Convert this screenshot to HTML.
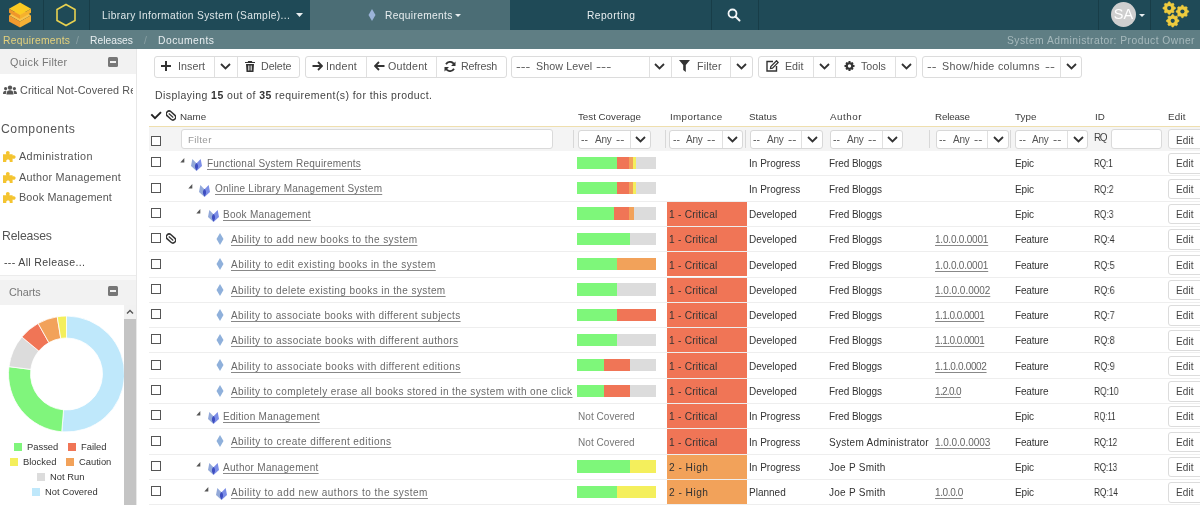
<!DOCTYPE html>
<html><head><meta charset="utf-8">
<style>
*{box-sizing:border-box;margin:0;padding:0}
html,body{width:1200px;height:505px;overflow:hidden;background:#fff;font-family:"Liberation Sans",sans-serif;color:#444}
.a{position:absolute;white-space:nowrap}
.ic{position:absolute}
.t{position:absolute;white-space:nowrap;font-size:11px;line-height:13px;will-change:transform}
.btn{position:absolute;border:1px solid #dcdcdc;border-radius:3px;background:#fff;height:22px}
.dv{position:absolute;top:0;bottom:0;width:1px;background:#e0e0e0}
.sel{position:absolute;border:1px solid #d8d8d8;border-radius:3px;background:#fff}
.lnk{text-decoration:underline;text-decoration-color:#888;text-underline-offset:1.5px}
</style></head><body>

<div class="a" style="left:0;top:0;width:1200px;height:30px;background:#1f4a57"></div>
<div class="a" style="left:43px;top:0;width:1px;height:30px;background:#183d48"></div>
<div class="a" style="left:89px;top:0;width:1px;height:30px;background:#183d48"></div>
<div class="a" style="left:711px;top:0;width:1px;height:30px;background:#183d48"></div>
<div class="a" style="left:758px;top:0;width:1px;height:30px;background:#183d48"></div>
<div class="a" style="left:1098px;top:0;width:1px;height:30px;background:#183d48"></div>
<div class="a" style="left:1150px;top:0;width:1px;height:30px;background:#183d48"></div>
<div class="a" style="left:310px;top:0;width:200px;height:30px;background:#4b6d75"></div>
<svg class="ic" style="left:8px;top:1px" width="24" height="28" viewBox="0 0 24 28">
<path d="M12 8 L23 14.2 L12 20.4 L1 14.2 Z" fill="#f9c44a"/>
<path d="M1 14.2 L12 20.4 L12 26.6 L1 20.4 Z" fill="#f29a2e"/>
<path d="M23 14.2 L12 20.4 L12 26.6 L23 20.4 Z" fill="#f6b236"/>
<path d="M0.6 11.6 L1.6 12.2 L1.6 13 L0.6 13.6 Z M23.4 11.6 L22.4 12.2 L22.4 13 L23.4 13.6 Z" fill="#1f4a57"/>
<path d="M12 1.5 L23 7.8 L12 14.1 L1 7.8 Z" fill="#fbcb22"/>
<path d="M1 7.8 L12 14.1 L12 18 L1 11.7 Z" fill="#f0972a"/>
<path d="M23 7.8 L12 14.1 L12 18 L23 11.7 Z" fill="#f5b12c"/>
</svg>
<svg class="ic" style="left:55px;top:3px" width="22" height="24" viewBox="0 0 22 24">
<path d="M11 1.5 L20 6.5 L20 17.5 L11 22.5 L2 17.5 L2 6.5 Z" fill="none" stroke="#e8d150" stroke-width="1.6"/></svg>
<div class="t" style="left:102px;top:5.50px;line-height:20px;font-size:10.2px;color:#dfe8ea;letter-spacing:0.362px;">Library Information System (Sample)...</div>
<svg class="ic" style="left:296px;top:13px" width="7" height="4" viewBox="0 0 7 4"><path d="M0 0 L7 0 L3.5 4 Z" fill="#e8eef0"/></svg>
<svg class="ic" style="left:368px;top:9px" width="8" height="12" viewBox="0 0 8 12"><path d="M4 0 L7.5 6 L4 12 L0.5 6 Z" fill="#9bb3d8"/></svg>
<div class="t" style="left:385px;top:5.50px;line-height:20px;font-size:10.2px;color:#e8eef0;letter-spacing:0.355px;">Requirements</div>
<svg class="ic" style="left:455px;top:14px" width="6" height="3" viewBox="0 0 6 3"><path d="M0 0 L6 0 L3 3 Z" fill="#e8eef0"/></svg>
<div class="t" style="left:587px;top:5.50px;line-height:20px;font-size:10.2px;color:#e8eef0;letter-spacing:0.472px;">Reporting</div>
<svg class="ic" style="left:727px;top:8px" width="14" height="14" viewBox="0 0 14 14"><circle cx="5.5" cy="5.5" r="4" fill="none" stroke="#f4f7f8" stroke-width="1.8"/><path d="M8.5 8.5 L12.5 12.5" stroke="#f4f7f8" stroke-width="2" stroke-linecap="round"/></svg>
<div class="a" style="left:1111px;top:2px;width:25px;height:25px;border-radius:50%;background:#cfcfcf"></div>
<div class="t" style="left:1110px;top:4px;width:27px;text-align:center;color:#fff;font-size:14.5px;line-height:20px">SA</div>
<svg class="ic" style="left:1139px;top:14px" width="6" height="3" viewBox="0 0 6 3"><path d="M0 0 L6 0 L3 3 Z" fill="#e8eef0"/></svg>
<svg class="ic" style="left:1160px;top:0px" width="40" height="30" viewBox="0 0 40 30"><polygon points="15.47,7.48 15.47,8.72 14.02,9.56 13.64,10.48 14.07,12.10 13.20,12.97 11.58,12.54 10.66,12.92 9.82,14.37 8.58,14.37 7.74,12.92 6.82,12.54 5.20,12.97 4.33,12.10 4.76,10.48 4.38,9.56 2.93,8.72 2.93,7.48 4.38,6.64 4.76,5.72 4.33,4.10 5.20,3.23 6.82,3.66 7.74,3.28 8.58,1.83 9.82,1.83 10.66,3.28 11.58,3.66 13.20,3.23 14.07,4.10 13.64,5.72 14.02,6.64" fill="#eecb3e" stroke="#eecb3e" stroke-width="0.6" stroke-linejoin="round"/><circle cx="9.2" cy="8.1" r="2.08" fill="#1f4a57"/><polygon points="28.67,10.88 28.67,12.12 27.22,12.96 26.84,13.88 27.27,15.50 26.40,16.37 24.78,15.94 23.86,16.32 23.02,17.77 21.78,17.77 20.94,16.32 20.02,15.94 18.40,16.37 17.53,15.50 17.96,13.88 17.58,12.96 16.13,12.12 16.13,10.88 17.58,10.04 17.96,9.12 17.53,7.50 18.40,6.63 20.02,7.06 20.94,6.68 21.78,5.23 23.02,5.23 23.86,6.68 24.78,7.06 26.40,6.63 27.27,7.50 26.84,9.12 27.22,10.04" fill="#eecb3e" stroke="#eecb3e" stroke-width="0.6" stroke-linejoin="round"/><circle cx="22.4" cy="11.5" r="2.08" fill="#1f4a57"/><polygon points="18.97,20.18 18.97,21.42 17.52,22.26 17.14,23.18 17.57,24.80 16.70,25.67 15.08,25.24 14.16,25.62 13.32,27.07 12.08,27.07 11.24,25.62 10.32,25.24 8.70,25.67 7.83,24.80 8.26,23.18 7.88,22.26 6.43,21.42 6.43,20.18 7.88,19.34 8.26,18.42 7.83,16.80 8.70,15.93 10.32,16.36 11.24,15.98 12.08,14.53 13.32,14.53 14.16,15.98 15.08,16.36 16.70,15.93 17.57,16.80 17.14,18.42 17.52,19.34" fill="#eecb3e" stroke="#eecb3e" stroke-width="0.6" stroke-linejoin="round"/><circle cx="12.7" cy="20.8" r="2.08" fill="#1f4a57"/></svg>
<div class="a" style="left:0;top:30px;width:1200px;height:19px;background:#5f7e84"></div>
<div class="t" style="left:3px;top:30.70px;line-height:20px;font-size:10.3px;color:#e6d27c;letter-spacing:0.262px;">Requirements</div>
<div class="t" style="left:76px;top:30.70px;line-height:20px;font-size:10.3px;color:#8aa0a4;">/</div>
<div class="t" style="left:90px;top:30.70px;line-height:20px;font-size:10.3px;color:#e8eef0;letter-spacing:0.009px;">Releases</div>
<div class="t" style="left:144px;top:30.70px;line-height:20px;font-size:10.3px;color:#8aa0a4;">/</div>
<div class="t" style="left:158px;top:30.70px;line-height:20px;font-size:10.3px;color:#e8eef0;letter-spacing:0.488px;">Documents</div>
<div class="t" style="left:1007px;top:30.70px;line-height:20px;font-size:10.3px;color:#a6b9bc;letter-spacing:0.467px;">System Administrator: Product Owner</div>
<div class="a" style="left:136px;top:49px;width:1px;height:456px;background:#e8e8e8"></div>
<div class="a" style="left:0;top:49px;width:136px;height:25px;background:#f2f2f2"></div>
<div class="t" style="left:9.5px;top:51.80px;line-height:20px;font-size:10.8px;color:#777;letter-spacing:0.236px;">Quick Filter</div>
<div class="a" style="left:108px;top:57px;width:10px;height:10px;background:#777;border-radius:1.5px"><div class="a" style="left:2px;top:4px;width:6px;height:2px;background:#f0f0f0"></div></div>
<svg class="ic" style="left:3px;top:85px" width="14" height="10" viewBox="0 0 14 10">
<circle cx="7" cy="2.6" r="2.2" fill="#555"/><path d="M3.5 9.5 C3.5 6 5 5.2 7 5.2 C9 5.2 10.5 6 10.5 9.5 Z" fill="#555"/>
<circle cx="2.6" cy="3.6" r="1.6" fill="#555"/><path d="M0 9 C0 6.5 1 5.8 2.6 5.8 C3.2 5.8 3.4 6 3.4 6 C3 7 2.9 8 2.9 9 Z" fill="#555"/>
<circle cx="11.4" cy="3.6" r="1.6" fill="#555"/><path d="M14 9 C14 6.5 13 5.8 11.4 5.8 C10.8 5.8 10.6 6 10.6 6 C11 7 11.1 8 11.1 9 Z" fill="#555"/>
</svg>
<div class="a" style="left:18px;top:80px;width:115px;height:20px;overflow:hidden"><div class="t" style="left:1.5px;top:0.00px;line-height:20px;font-size:10.8px;color:#555;letter-spacing:0.097px;">Critical Not-Covered Requirements</div></div>
<div class="t" style="left:1.4px;top:119.20px;line-height:20px;font-size:12.2px;color:#555;letter-spacing:0.536px;">Components</div>
<svg class="ic" style="left:2.6px;top:150.9px" width="13" height="11" viewBox="0 0 13 11"><path d="M0 3.2 H3.4 C3 2.6 2.9 2.2 2.9 1.8 C2.9 0.8 3.8 0 4.8 0 C5.8 0 6.7 0.8 6.7 1.8 C6.7 2.2 6.6 2.6 6.2 3.2 H9.6 V4.6 C10 4.3 10.4 4.2 10.8 4.2 C11.8 4.2 12.6 5 12.6 6 C12.6 7 11.8 7.8 10.8 7.8 C10.4 7.8 10 7.7 9.6 7.4 V11 H6.6 C6.7 10.7 6.8 10.4 6.8 10.1 C6.8 9.1 6 8.4 5 8.4 C4 8.4 3.2 9.1 3.2 10.1 C3.2 10.4 3.3 10.7 3.4 11 H0 Z" fill="#f4c430"/></svg>
<div class="t" style="left:19.4px;top:146.10px;line-height:20px;font-size:10.8px;color:#555;letter-spacing:0.390px;">Administration</div>
<svg class="ic" style="left:2.6px;top:172.0px" width="13" height="11" viewBox="0 0 13 11"><path d="M0 3.2 H3.4 C3 2.6 2.9 2.2 2.9 1.8 C2.9 0.8 3.8 0 4.8 0 C5.8 0 6.7 0.8 6.7 1.8 C6.7 2.2 6.6 2.6 6.2 3.2 H9.6 V4.6 C10 4.3 10.4 4.2 10.8 4.2 C11.8 4.2 12.6 5 12.6 6 C12.6 7 11.8 7.8 10.8 7.8 C10.4 7.8 10 7.7 9.6 7.4 V11 H6.6 C6.7 10.7 6.8 10.4 6.8 10.1 C6.8 9.1 6 8.4 5 8.4 C4 8.4 3.2 9.1 3.2 10.1 C3.2 10.4 3.3 10.7 3.4 11 H0 Z" fill="#f4c430"/></svg>
<div class="t" style="left:19.4px;top:167.20px;line-height:20px;font-size:10.8px;color:#555;letter-spacing:0.246px;">Author Management</div>
<svg class="ic" style="left:2.6px;top:192.20000000000002px" width="13" height="11" viewBox="0 0 13 11"><path d="M0 3.2 H3.4 C3 2.6 2.9 2.2 2.9 1.8 C2.9 0.8 3.8 0 4.8 0 C5.8 0 6.7 0.8 6.7 1.8 C6.7 2.2 6.6 2.6 6.2 3.2 H9.6 V4.6 C10 4.3 10.4 4.2 10.8 4.2 C11.8 4.2 12.6 5 12.6 6 C12.6 7 11.8 7.8 10.8 7.8 C10.4 7.8 10 7.7 9.6 7.4 V11 H6.6 C6.7 10.7 6.8 10.4 6.8 10.1 C6.8 9.1 6 8.4 5 8.4 C4 8.4 3.2 9.1 3.2 10.1 C3.2 10.4 3.3 10.7 3.4 11 H0 Z" fill="#f4c430"/></svg>
<div class="t" style="left:19.4px;top:187.40px;line-height:20px;font-size:10.8px;color:#555;letter-spacing:0.160px;">Book Management</div>
<div class="t" style="left:1.7px;top:226.40px;line-height:20px;font-size:12.2px;color:#555;letter-spacing:-0.123px;">Releases</div>
<div class="t" style="left:4.2px;top:251.50px;line-height:20px;font-size:10.6px;color:#444;letter-spacing:0.329px;">--- All Release...</div>
<div class="a" style="left:0;top:275px;width:136px;height:5px;background:#f8f8f8;border-top:1px solid #ececec"></div>
<div class="a" style="left:0;top:280px;width:136px;height:25px;background:#f2f2f2"></div>
<div class="t" style="left:9.4px;top:282.10px;line-height:20px;font-size:10.8px;color:#777;letter-spacing:-0.042px;">Charts</div>
<div class="a" style="left:108px;top:286px;width:10px;height:10px;background:#777;border-radius:1.5px"><div class="a" style="left:2px;top:4px;width:6px;height:2px;background:#f0f0f0"></div></div>
<div class="a" style="left:124px;top:305px;width:12px;height:200px;background:#f1f1f1"></div>
<div class="a" style="left:124px;top:319px;width:12px;height:186px;background:#c4c4c4"></div>
<svg class="ic" style="left:126px;top:309px" width="8" height="5" viewBox="0 0 8 5"><path d="M1 4.5 L4 1.5 L7 4.5" fill="none" stroke="#555" stroke-width="1.4"/></svg>
<svg class="ic" style="left:0;top:305px" width="124" height="200" viewBox="0 305 124 200"><path d="M66.50 316.00 A58 58 0 1 1 61.75 431.80 L63.55 409.88 A36 36 0 1 0 66.50 338.00 Z" fill="#bfe8fb" stroke="#fff" stroke-width="0.8"/><path d="M61.75 431.80 A58 58 0 0 1 8.97 366.63 L30.79 369.43 A36 36 0 0 0 63.55 409.88 Z" fill="#80f57c" stroke="#fff" stroke-width="0.8"/><path d="M8.97 366.63 A58 58 0 0 1 21.87 336.95 L38.80 351.00 A36 36 0 0 0 30.79 369.43 Z" fill="#dcdcdc" stroke="#fff" stroke-width="0.8"/><path d="M21.87 336.95 A58 58 0 0 1 38.12 323.42 L48.88 342.61 A36 36 0 0 0 38.80 351.00 Z" fill="#f07556" stroke="#fff" stroke-width="0.8"/><path d="M38.12 323.42 A58 58 0 0 1 57.23 316.75 L60.74 338.46 A36 36 0 0 0 48.88 342.61 Z" fill="#f2a25a" stroke="#fff" stroke-width="0.8"/><path d="M57.23 316.75 A58 58 0 0 1 66.50 316.00 L66.50 338.00 A36 36 0 0 0 60.74 338.46 Z" fill="#f4ef5c" stroke="#fff" stroke-width="0.8"/></svg>
<div class="a" style="left:14px;top:442.5px;width:8px;height:8px;background:#80f57c"></div><div class="t" style="left:26.5px;top:440.8px;color:#333;font-size:9.4px;line-height:12px">Passed</div>
<div class="a" style="left:68px;top:442.5px;width:8px;height:8px;background:#f07556"></div><div class="t" style="left:81px;top:440.8px;color:#333;font-size:9.4px;line-height:12px">Failed</div>
<div class="a" style="left:10px;top:457.5px;width:8px;height:8px;background:#f4ef5c"></div><div class="t" style="left:22.5px;top:455.8px;color:#333;font-size:9.4px;line-height:12px">Blocked</div>
<div class="a" style="left:66px;top:457.5px;width:8px;height:8px;background:#f2a25a"></div><div class="t" style="left:79px;top:455.8px;color:#333;font-size:9.4px;line-height:12px">Caution</div>
<div class="a" style="left:37px;top:472.5px;width:8px;height:8px;background:#dcdcdc"></div><div class="t" style="left:49.5px;top:470.8px;color:#333;font-size:9.4px;line-height:12px">Not Run</div>
<div class="a" style="left:32px;top:487.5px;width:8px;height:8px;background:#bfe8fb"></div><div class="t" style="left:45px;top:485.8px;color:#333;font-size:9.4px;line-height:12px">Not Covered</div>
<div class="btn" style="left:153.5px;top:55.5px;width:146.5px"><div class="dv" style="left:59.0px"></div><div class="dv" style="left:82.0px"></div></div>
<svg class="ic" style="left:161px;top:61px" width="10" height="10" viewBox="0 0 10 10"><path d="M5 0 V10 M0 5 H10" stroke="#333" stroke-width="2"/></svg>
<div class="t" style="left:177.5px;top:56.30px;line-height:20px;font-size:10.7px;color:#555;letter-spacing:0.048px;">Insert</div>
<svg class="ic" style="left:219.5px;top:63px" width="11" height="7" viewBox="0 0 11 7"><path d="M1 1 L5.5 5.5 L10 1" fill="none" stroke="#333" stroke-width="1.8"/></svg>
<svg class="ic" style="left:244.5px;top:60.5px" width="10" height="11" viewBox="0 0 10 11"><path d="M0 1.5 H10 M3.5 1.5 V0.3 H6.5 V1.5" stroke="#333" stroke-width="1.2" fill="none"/><path d="M1 3 H9 L8.5 11 H1.5 Z" fill="#333"/><path d="M3.5 4.5 V9.5 M5 4.5 V9.5 M6.5 4.5 V9.5" stroke="#fff" stroke-width="0.7"/></svg>
<div class="t" style="left:260.5px;top:56.30px;line-height:20px;font-size:10.7px;color:#555;letter-spacing:-0.086px;">Delete</div>
<div class="btn" style="left:304.5px;top:55.5px;width:202.0px"><div class="dv" style="left:60.0px"></div><div class="dv" style="left:130.5px"></div></div>
<svg class="ic" style="left:312px;top:61px" width="11" height="10" viewBox="0 0 11 10"><path d="M0.5 5 H10 M6 1 L10 5 L6 9" fill="none" stroke="#333" stroke-width="1.8"/></svg>
<div class="t" style="left:326px;top:56.30px;line-height:20px;font-size:10.7px;color:#555;letter-spacing:0.210px;">Indent</div>
<svg class="ic" style="left:373.5px;top:61px" width="11" height="10" viewBox="0 0 11 10"><path d="M10.5 5 H1 M5 1 L1 5 L5 9" fill="none" stroke="#333" stroke-width="1.8"/></svg>
<div class="t" style="left:387.6px;top:56.30px;line-height:20px;font-size:10.7px;color:#555;letter-spacing:0.205px;">Outdent</div>
<svg class="ic" style="left:444px;top:60.5px" width="12" height="11" viewBox="0 0 12 11"><path d="M10.2 4 A4.5 4.5 0 0 0 2 3.2 M1.8 7 A4.5 4.5 0 0 0 10 7.8" fill="none" stroke="#333" stroke-width="1.8"/><path d="M11.5 0.5 V5 H7 Z M0.5 10.5 V6 H5 Z" fill="#333"/></svg>
<div class="t" style="left:461.3px;top:56.30px;line-height:20px;font-size:10.7px;color:#555;letter-spacing:-0.194px;">Refresh</div>
<div class="btn" style="left:510.5px;top:55.5px;width:242.5px"><div class="dv" style="left:137.5px"></div><div class="dv" style="left:159.5px"></div><div class="dv" style="left:218.0px"></div></div>
<div class="t" style="left:516px;top:56.30px;line-height:20px;font-size:10.7px;color:#555;transform:scaleX(1.338);transform-origin:0 0;">---</div>
<div class="t" style="left:535.8px;top:56.30px;line-height:20px;font-size:10.7px;color:#555;letter-spacing:0.098px;">Show Level</div>
<div class="t" style="left:596.4px;top:56.30px;line-height:20px;font-size:10.7px;color:#555;transform:scaleX(1.431);transform-origin:0 0;">---</div>
<svg class="ic" style="left:654px;top:63px" width="11" height="7" viewBox="0 0 11 7"><path d="M1 1 L5.5 5.5 L10 1" fill="none" stroke="#333" stroke-width="1.8"/></svg>
<svg class="ic" style="left:679px;top:60px" width="11" height="12" viewBox="0 0 11 12"><path d="M0 0 H11 L6.8 5 V12 L4.2 10 V5 Z" fill="#333"/></svg>
<div class="t" style="left:696.5px;top:56.30px;line-height:20px;font-size:10.7px;color:#555;letter-spacing:0.145px;">Filter</div>
<svg class="ic" style="left:736px;top:63px" width="11" height="7" viewBox="0 0 11 7"><path d="M1 1 L5.5 5.5 L10 1" fill="none" stroke="#333" stroke-width="1.8"/></svg>
<div class="btn" style="left:757.5px;top:55.5px;width:159.5px"><div class="dv" style="left:54.0px"></div><div class="dv" style="left:76.0px"></div><div class="dv" style="left:136.0px"></div></div>
<svg class="ic" style="left:765.5px;top:60px" width="13" height="12" viewBox="0 0 13 12"><path d="M7 1.5 H1 V11 H10.5 V6" fill="none" stroke="#333" stroke-width="1.4"/><path d="M10.5 0.8 L12.2 2.5 L6.5 8.2 L4.5 8.5 L4.8 6.5 Z" fill="none" stroke="#333" stroke-width="1.3"/></svg>
<div class="t" style="left:784.6px;top:56.30px;line-height:20px;font-size:10.7px;color:#555;letter-spacing:-0.013px;">Edit</div>
<svg class="ic" style="left:818.5px;top:63px" width="11" height="7" viewBox="0 0 11 7"><path d="M1 1 L5.5 5.5 L10 1" fill="none" stroke="#333" stroke-width="1.8"/></svg>
<svg class="ic" style="left:843.5px;top:60.5px" width="11" height="11" viewBox="0 0 11 11"><path d="M4.6 0 H6.4 L6.8 1.7 L8.3 1 L9.5 2.2 L8.8 3.7 L10.5 4.1 V5.9 L8.8 6.3 L9.5 7.8 L8.3 9 L6.8 8.3 L6.4 10 H4.6 L4.2 8.3 L2.7 9 L1.5 7.8 L2.2 6.3 L0.5 5.9 V4.1 L2.2 3.7 L1.5 2.2 L2.7 1 L4.2 1.7 Z" fill="#333"/><circle cx="5.5" cy="5" r="1.7" fill="#fff"/></svg>
<div class="t" style="left:861px;top:56.30px;line-height:20px;font-size:10.7px;color:#555;letter-spacing:0.005px;">Tools</div>
<svg class="ic" style="left:900.5px;top:63px" width="11" height="7" viewBox="0 0 11 7"><path d="M1 1 L5.5 5.5 L10 1" fill="none" stroke="#333" stroke-width="1.8"/></svg>
<div class="btn" style="left:922px;top:55.5px;width:160px"><div class="dv" style="left:137px"></div></div>
<div class="t" style="left:927px;top:56.30px;line-height:20px;font-size:10.7px;color:#555;transform:scaleX(1.333);transform-origin:0 0;">--</div>
<div class="t" style="left:942px;top:56.30px;line-height:20px;font-size:10.7px;color:#555;letter-spacing:0.301px;">Show/hide columns</div>
<div class="t" style="left:1044.7px;top:56.30px;line-height:20px;font-size:10.7px;color:#555;transform:scaleX(1.389);transform-origin:0 0;">--</div>
<svg class="ic" style="left:1066px;top:63px" width="11" height="7" viewBox="0 0 11 7"><path d="M1 1 L5.5 5.5 L10 1" fill="none" stroke="#333" stroke-width="1.8"/></svg>
<div class="t" style="left:155.4px;top:85.20px;line-height:20px;font-size:10.5px;color:#444;letter-spacing:0.431px;">Displaying <b style="color:#333">15</b> out of <b style="color:#333">35</b> requirement(s) for this product.</div>
<svg class="ic" style="left:150px;top:110px" width="12" height="11" viewBox="0 0 12 11"><path d="M1.3 4.3 L5 8.2 L11 2.2" fill="none" stroke="#222" stroke-width="1.9"/></svg>
<svg class="ic" style="left:165.5px;top:110px" width="10" height="11" viewBox="0 0 10 11"><g transform="rotate(-48 5 5.5)"><rect x="2.2" y="0.2" width="5.6" height="10.6" rx="2.8" fill="none" stroke="#333" stroke-width="1.5"/><path d="M5 2.5 V8.5" stroke="#333" stroke-width="1.1"/></g></svg>
<div class="t" style="left:180px;top:107.00px;line-height:20px;font-size:9.8px;color:#3c3c3c;letter-spacing:0.019px;">Name</div>
<div class="t" style="left:578.2px;top:107.00px;line-height:20px;font-size:9.8px;color:#3c3c3c;letter-spacing:-0.024px;">Test Coverage</div>
<div class="t" style="left:669.5px;top:107.00px;line-height:20px;font-size:9.8px;color:#3c3c3c;letter-spacing:0.364px;">Importance</div>
<div class="t" style="left:749.3px;top:107.00px;line-height:20px;font-size:9.8px;color:#3c3c3c;letter-spacing:0.023px;">Status</div>
<div class="t" style="left:829.6px;top:107.00px;line-height:20px;font-size:9.8px;color:#3c3c3c;letter-spacing:0.545px;">Author</div>
<div class="t" style="left:934.6px;top:107.00px;line-height:20px;font-size:9.8px;color:#3c3c3c;letter-spacing:-0.159px;">Release</div>
<div class="t" style="left:1015px;top:107.00px;line-height:20px;font-size:9.8px;color:#3c3c3c;letter-spacing:0.051px;">Type</div>
<div class="t" style="left:1094.7px;top:107.00px;line-height:20px;font-size:9.8px;color:#3c3c3c;">ID</div>
<div class="t" style="left:1167.9px;top:107.00px;line-height:20px;font-size:9.8px;color:#3c3c3c;letter-spacing:0.238px;">Edit</div>
<div class="a" style="left:149px;top:126px;width:1051px;height:1px;background:#efdfae"></div>
<div class="a" style="left:149px;top:127px;width:1051px;height:23.5px;background:#f4f4f4"></div>
<div class="a" style="left:151px;top:135.5px;width:10px;height:10px;border:1px solid #555;background:#fff"></div>
<div class="a" style="left:180.5px;top:128.5px;width:372px;height:20px;border:1px solid #dadada;border-radius:3px;background:#fff"></div>
<div class="t" style="left:188.3px;top:129.50px;line-height:20px;font-size:9.8px;color:#999;letter-spacing:0.325px;">Filter</div>
<div class="a" style="left:572.5px;top:130px;width:1px;height:18px;background:#d8d8d8"></div>
<div class="a" style="left:664.5px;top:130px;width:1px;height:18px;background:#d8d8d8"></div>
<div class="a" style="left:745px;top:130px;width:1px;height:18px;background:#d8d8d8"></div>
<div class="a" style="left:929px;top:130px;width:1px;height:18px;background:#d8d8d8"></div>
<div class="a" style="left:1010px;top:130px;width:1px;height:18px;background:#d8d8d8"></div>
<div class="sel" style="left:577.5px;top:129.5px;width:73.5px;height:19px"><div class="dv" style="left:51.0px;background:#e0e0e0"></div></div>
<div class="t" style="left:581.3px;top:130.00px;line-height:20px;font-size:10px;color:#555;transform:scaleX(1.036);transform-origin:0 0;">--</div>
<div class="t" style="left:594.5px;top:130.00px;line-height:20px;font-size:10px;color:#555;letter-spacing:-0.216px;">Any</div>
<div class="t" style="left:615.5px;top:130.00px;line-height:20px;font-size:10px;color:#555;transform:scaleX(1.246);transform-origin:0 0;">--</div>
<svg class="ic" style="left:635.0px;top:136px" width="11" height="7" viewBox="0 0 11 7"><path d="M1 1 L5.5 5.5 L10 1" fill="none" stroke="#333" stroke-width="1.8"/></svg>
<div class="sel" style="left:669px;top:129.5px;width:74px;height:19px"><div class="dv" style="left:51.5px;background:#e0e0e0"></div></div>
<div class="t" style="left:672.8px;top:130.00px;line-height:20px;font-size:10px;color:#555;transform:scaleX(1.036);transform-origin:0 0;">--</div>
<div class="t" style="left:686px;top:130.00px;line-height:20px;font-size:10px;color:#555;letter-spacing:-0.216px;">Any</div>
<div class="t" style="left:707px;top:130.00px;line-height:20px;font-size:10px;color:#555;transform:scaleX(1.246);transform-origin:0 0;">--</div>
<svg class="ic" style="left:727.0px;top:136px" width="11" height="7" viewBox="0 0 11 7"><path d="M1 1 L5.5 5.5 L10 1" fill="none" stroke="#333" stroke-width="1.8"/></svg>
<div class="sel" style="left:749.5px;top:129.5px;width:73.5px;height:19px"><div class="dv" style="left:50.5px;background:#e0e0e0"></div></div>
<div class="t" style="left:753.3px;top:130.00px;line-height:20px;font-size:10px;color:#555;transform:scaleX(1.036);transform-origin:0 0;">--</div>
<div class="t" style="left:766.5px;top:130.00px;line-height:20px;font-size:10px;color:#555;letter-spacing:-0.216px;">Any</div>
<div class="t" style="left:787.5px;top:130.00px;line-height:20px;font-size:10px;color:#555;transform:scaleX(1.246);transform-origin:0 0;">--</div>
<svg class="ic" style="left:806.5px;top:136px" width="11" height="7" viewBox="0 0 11 7"><path d="M1 1 L5.5 5.5 L10 1" fill="none" stroke="#333" stroke-width="1.8"/></svg>
<div class="sel" style="left:829.5px;top:129.5px;width:73.5px;height:19px"><div class="dv" style="left:51.0px;background:#e0e0e0"></div></div>
<div class="t" style="left:833.3px;top:130.00px;line-height:20px;font-size:10px;color:#555;transform:scaleX(1.036);transform-origin:0 0;">--</div>
<div class="t" style="left:846.5px;top:130.00px;line-height:20px;font-size:10px;color:#555;letter-spacing:-0.216px;">Any</div>
<div class="t" style="left:867.5px;top:130.00px;line-height:20px;font-size:10px;color:#555;transform:scaleX(1.246);transform-origin:0 0;">--</div>
<svg class="ic" style="left:887.0px;top:136px" width="11" height="7" viewBox="0 0 11 7"><path d="M1 1 L5.5 5.5 L10 1" fill="none" stroke="#333" stroke-width="1.8"/></svg>
<div class="sel" style="left:935.5px;top:129.5px;width:73.5px;height:19px"><div class="dv" style="left:50.5px;background:#e0e0e0"></div></div>
<div class="t" style="left:939.3px;top:130.00px;line-height:20px;font-size:10px;color:#555;transform:scaleX(1.036);transform-origin:0 0;">--</div>
<div class="t" style="left:952.5px;top:130.00px;line-height:20px;font-size:10px;color:#555;letter-spacing:-0.216px;">Any</div>
<div class="t" style="left:973.5px;top:130.00px;line-height:20px;font-size:10px;color:#555;transform:scaleX(1.246);transform-origin:0 0;">--</div>
<svg class="ic" style="left:992.5px;top:136px" width="11" height="7" viewBox="0 0 11 7"><path d="M1 1 L5.5 5.5 L10 1" fill="none" stroke="#333" stroke-width="1.8"/></svg>
<div class="sel" style="left:1015px;top:129.5px;width:73px;height:19px"><div class="dv" style="left:51px;background:#e0e0e0"></div></div>
<div class="t" style="left:1018.8px;top:130.00px;line-height:20px;font-size:10px;color:#555;transform:scaleX(1.036);transform-origin:0 0;">--</div>
<div class="t" style="left:1032px;top:130.00px;line-height:20px;font-size:10px;color:#555;letter-spacing:-0.216px;">Any</div>
<div class="t" style="left:1053px;top:130.00px;line-height:20px;font-size:10px;color:#555;transform:scaleX(1.246);transform-origin:0 0;">--</div>
<svg class="ic" style="left:1072.5px;top:136px" width="11" height="7" viewBox="0 0 11 7"><path d="M1 1 L5.5 5.5 L10 1" fill="none" stroke="#333" stroke-width="1.8"/></svg>
<div class="t" style="left:1094px;top:127.60px;line-height:20px;font-size:10px;color:#444;letter-spacing:-1.500px;">RQ</div>
<div class="a" style="left:1111px;top:128.5px;width:51px;height:20px;border:1px solid #dadada;border-radius:3px;background:#fff"></div>
<div class="btn" style="left:1167.5px;top:129px;width:40px;height:20px"></div>
<div class="t" style="left:1176px;top:130.50px;line-height:20px;font-size:10px;color:#444;letter-spacing:0.089px;">Edit</div>
<div class="a" style="left:149px;top:175.30px;width:1051px;height:1px;background:#eeeeee"></div>
<div class="a" style="left:151px;top:157.30px;width:10px;height:10px;border:1px solid #555;background:#fff"></div>
<svg class="ic" style="left:180.0px;top:158.20000000000002px" width="5" height="5" viewBox="0 0 5 5"><path d="M4.3 0 L4.3 4.6 L0.3 4.6 Z" fill="#555"/></svg>
<svg class="ic" style="left:191.3px;top:159.20000000000002px" width="11" height="12" viewBox="0 0 11 12"><path d="M1.3 0 L5.5 4.2 L5.5 12 L0 6.9 Z" fill="#93a9d9"/><path d="M9.7 0 L5.5 4.2 L5.5 12 L11 6.9 Z" fill="#7b8de6"/><path d="M5.5 4 C7.1 5.2 7.3 7.3 6.9 8.7 L5.5 11.8 L4.1 8.7 C3.7 7.3 3.9 5.2 5.5 4 Z" fill="#3d4dc0"/></svg>
<div class="t lnk" style="left:206.5px;top:154.10px;line-height:20px;font-size:10px;color:#6a6a6a;letter-spacing:0.225px;">Functional System Requirements</div>
<div class="a" style="left:577px;top:156.80px;width:40.00px;height:12.3px;background:#7ef77a"></div>
<div class="a" style="left:617px;top:156.80px;width:12.40px;height:12.3px;background:#f07556"></div>
<div class="a" style="left:629.4px;top:156.80px;width:3.30px;height:12.3px;background:#f2a25a"></div>
<div class="a" style="left:632.7px;top:156.80px;width:3.30px;height:12.3px;background:#f4ef5c"></div>
<div class="a" style="left:636px;top:156.80px;width:20.00px;height:12.3px;background:#dcdcdc"></div>
<div class="t" style="left:749.2px;top:154.30px;line-height:20px;font-size:10px;color:#333;letter-spacing:0.005px;">In Progress</div>
<div class="t" style="left:829.3px;top:154.30px;line-height:20px;font-size:10px;color:#333;letter-spacing:-0.092px;">Fred Bloggs</div>
<div class="t" style="left:1014.5px;top:154.30px;line-height:20px;font-size:10px;color:#333;letter-spacing:-0.151px;">Epic</div>
<div class="t" style="left:1094.4px;top:154.30px;line-height:20px;font-size:10.4px;color:#333;transform:scaleX(0.770);transform-origin:0 0;">RQ:1</div>
<div class="btn" style="left:1168px;top:153.30px;width:40px;height:20.5px"></div>
<div class="t" style="left:1176px;top:154.40px;line-height:20px;font-size:10px;color:#444;letter-spacing:0.089px;">Edit</div>
<div class="a" style="left:149px;top:200.60px;width:1051px;height:1px;background:#eeeeee"></div>
<div class="a" style="left:151px;top:182.60px;width:10px;height:10px;border:1px solid #555;background:#fff"></div>
<svg class="ic" style="left:188.1px;top:183.50000000000003px" width="5" height="5" viewBox="0 0 5 5"><path d="M4.3 0 L4.3 4.6 L0.3 4.6 Z" fill="#555"/></svg>
<svg class="ic" style="left:199.4px;top:184.50000000000003px" width="11" height="12" viewBox="0 0 11 12"><path d="M1.3 0 L5.5 4.2 L5.5 12 L0 6.9 Z" fill="#93a9d9"/><path d="M9.7 0 L5.5 4.2 L5.5 12 L11 6.9 Z" fill="#7b8de6"/><path d="M5.5 4 C7.1 5.2 7.3 7.3 6.9 8.7 L5.5 11.8 L4.1 8.7 C3.7 7.3 3.9 5.2 5.5 4 Z" fill="#3d4dc0"/></svg>
<div class="t lnk" style="left:214.6px;top:179.40px;line-height:20px;font-size:10px;color:#6a6a6a;letter-spacing:0.241px;">Online Library Management System</div>
<div class="a" style="left:577px;top:182.10px;width:40.00px;height:12.3px;background:#7ef77a"></div>
<div class="a" style="left:617px;top:182.10px;width:12.40px;height:12.3px;background:#f07556"></div>
<div class="a" style="left:629.4px;top:182.10px;width:3.30px;height:12.3px;background:#f2a25a"></div>
<div class="a" style="left:632.7px;top:182.10px;width:3.30px;height:12.3px;background:#f4ef5c"></div>
<div class="a" style="left:636px;top:182.10px;width:20.00px;height:12.3px;background:#dcdcdc"></div>
<div class="t" style="left:749.2px;top:179.60px;line-height:20px;font-size:10px;color:#333;letter-spacing:0.005px;">In Progress</div>
<div class="t" style="left:829.3px;top:179.60px;line-height:20px;font-size:10px;color:#333;letter-spacing:-0.092px;">Fred Bloggs</div>
<div class="t" style="left:1014.5px;top:179.60px;line-height:20px;font-size:10px;color:#333;letter-spacing:-0.151px;">Epic</div>
<div class="t" style="left:1094.4px;top:179.60px;line-height:20px;font-size:10.4px;color:#333;transform:scaleX(0.803);transform-origin:0 0;">RQ:2</div>
<div class="btn" style="left:1168px;top:178.60px;width:40px;height:20.5px"></div>
<div class="t" style="left:1176px;top:179.70px;line-height:20px;font-size:10px;color:#444;letter-spacing:0.089px;">Edit</div>
<div class="a" style="left:149px;top:225.90px;width:1051px;height:1px;background:#eeeeee"></div>
<div class="a" style="left:151px;top:207.90px;width:10px;height:10px;border:1px solid #555;background:#fff"></div>
<svg class="ic" style="left:196.2px;top:208.8px" width="5" height="5" viewBox="0 0 5 5"><path d="M4.3 0 L4.3 4.6 L0.3 4.6 Z" fill="#555"/></svg>
<svg class="ic" style="left:207.5px;top:209.8px" width="11" height="12" viewBox="0 0 11 12"><path d="M1.3 0 L5.5 4.2 L5.5 12 L0 6.9 Z" fill="#93a9d9"/><path d="M9.7 0 L5.5 4.2 L5.5 12 L11 6.9 Z" fill="#7b8de6"/><path d="M5.5 4 C7.1 5.2 7.3 7.3 6.9 8.7 L5.5 11.8 L4.1 8.7 C3.7 7.3 3.9 5.2 5.5 4 Z" fill="#3d4dc0"/></svg>
<div class="t lnk" style="left:222.7px;top:204.70px;line-height:20px;font-size:10px;color:#6a6a6a;letter-spacing:0.261px;">Book Management</div>
<div class="a" style="left:577px;top:207.40px;width:37.00px;height:12.3px;background:#7ef77a"></div>
<div class="a" style="left:614px;top:207.40px;width:15.00px;height:12.3px;background:#f07556"></div>
<div class="a" style="left:629px;top:207.40px;width:4.50px;height:12.3px;background:#f2a25a"></div>
<div class="a" style="left:633.5px;top:207.40px;width:22.50px;height:12.3px;background:#dcdcdc"></div>
<div class="a" style="left:667px;top:201.60px;width:80px;height:24.30px;background:#f07556"></div>
<div class="t" style="left:669px;top:204.90px;line-height:20px;font-size:10.2px;color:#333;letter-spacing:0.227px;">1 - Critical</div>
<div class="t" style="left:749.2px;top:204.90px;line-height:20px;font-size:10px;color:#333;letter-spacing:0.006px;">Developed</div>
<div class="t" style="left:829.3px;top:204.90px;line-height:20px;font-size:10px;color:#333;letter-spacing:-0.092px;">Fred Bloggs</div>
<div class="t" style="left:1014.5px;top:204.90px;line-height:20px;font-size:10px;color:#333;letter-spacing:-0.151px;">Epic</div>
<div class="t" style="left:1094.4px;top:204.90px;line-height:20px;font-size:10.4px;color:#333;transform:scaleX(0.803);transform-origin:0 0;">RQ:3</div>
<div class="btn" style="left:1168px;top:203.90px;width:40px;height:20.5px"></div>
<div class="t" style="left:1176px;top:205.00px;line-height:20px;font-size:10px;color:#444;letter-spacing:0.089px;">Edit</div>
<div class="a" style="left:149px;top:251.20px;width:1051px;height:1px;background:#eeeeee"></div>
<div class="a" style="left:151px;top:233.20px;width:10px;height:10px;border:1px solid #555;background:#fff"></div>
<svg class="ic" style="left:165.5px;top:233.20px" width="10" height="11" viewBox="0 0 10 11"><g transform="rotate(-48 5 5.5)"><rect x="2.2" y="0.2" width="5.6" height="10.6" rx="2.8" fill="none" stroke="#333" stroke-width="1.5"/><path d="M5 2.5 V8.5" stroke="#333" stroke-width="1.1"/></g></svg>
<svg class="ic" style="left:216.3px;top:232.9px" width="8" height="12" viewBox="0 0 8 12"><path d="M4 0 L7.5 6 L4 12 L0.5 6 Z" fill="#8fb0db"/></svg>
<div class="t lnk" style="left:230.8px;top:230.00px;line-height:20px;font-size:10px;color:#6a6a6a;letter-spacing:0.430px;">Ability to add new books to the system</div>
<div class="a" style="left:577px;top:232.70px;width:53.00px;height:12.3px;background:#7ef77a"></div>
<div class="a" style="left:630px;top:232.70px;width:26.00px;height:12.3px;background:#dcdcdc"></div>
<div class="a" style="left:667px;top:226.90px;width:80px;height:24.30px;background:#f07556"></div>
<div class="t" style="left:669px;top:230.20px;line-height:20px;font-size:10.2px;color:#333;letter-spacing:0.227px;">1 - Critical</div>
<div class="t" style="left:749.2px;top:230.20px;line-height:20px;font-size:10px;color:#333;letter-spacing:0.006px;">Developed</div>
<div class="t" style="left:829.3px;top:230.20px;line-height:20px;font-size:10px;color:#333;letter-spacing:-0.092px;">Fred Bloggs</div>
<div class="t lnk" style="left:934.7px;top:230.20px;line-height:20px;font-size:10px;color:#666;letter-spacing:-0.201px;">1.0.0.0.0001</div>
<div class="t" style="left:1014.5px;top:230.20px;line-height:20px;font-size:10px;color:#333;letter-spacing:-0.161px;">Feature</div>
<div class="t" style="left:1094.4px;top:230.20px;line-height:20px;font-size:10.4px;color:#333;transform:scaleX(0.849);transform-origin:0 0;">RQ:4</div>
<div class="btn" style="left:1168px;top:229.20px;width:40px;height:20.5px"></div>
<div class="t" style="left:1176px;top:230.30px;line-height:20px;font-size:10px;color:#444;letter-spacing:0.089px;">Edit</div>
<div class="a" style="left:149px;top:276.50px;width:1051px;height:1px;background:#eeeeee"></div>
<div class="a" style="left:151px;top:258.50px;width:10px;height:10px;border:1px solid #555;background:#fff"></div>
<svg class="ic" style="left:216.3px;top:258.2px" width="8" height="12" viewBox="0 0 8 12"><path d="M4 0 L7.5 6 L4 12 L0.5 6 Z" fill="#8fb0db"/></svg>
<div class="t lnk" style="left:230.8px;top:255.30px;line-height:20px;font-size:10px;color:#6a6a6a;letter-spacing:0.460px;">Ability to edit existing books in the system</div>
<div class="a" style="left:577px;top:258.00px;width:40.00px;height:12.3px;background:#7ef77a"></div>
<div class="a" style="left:617px;top:258.00px;width:39.00px;height:12.3px;background:#f2a25a"></div>
<div class="a" style="left:667px;top:252.20px;width:80px;height:24.30px;background:#f07556"></div>
<div class="t" style="left:669px;top:255.50px;line-height:20px;font-size:10.2px;color:#333;letter-spacing:0.227px;">1 - Critical</div>
<div class="t" style="left:749.2px;top:255.50px;line-height:20px;font-size:10px;color:#333;letter-spacing:0.006px;">Developed</div>
<div class="t" style="left:829.3px;top:255.50px;line-height:20px;font-size:10px;color:#333;letter-spacing:-0.092px;">Fred Bloggs</div>
<div class="t lnk" style="left:934.7px;top:255.50px;line-height:20px;font-size:10px;color:#666;letter-spacing:-0.201px;">1.0.0.0.0001</div>
<div class="t" style="left:1014.5px;top:255.50px;line-height:20px;font-size:10px;color:#333;letter-spacing:-0.161px;">Feature</div>
<div class="t" style="left:1094.4px;top:255.50px;line-height:20px;font-size:10.4px;color:#333;transform:scaleX(0.849);transform-origin:0 0;">RQ:5</div>
<div class="btn" style="left:1168px;top:254.50px;width:40px;height:20.5px"></div>
<div class="t" style="left:1176px;top:255.60px;line-height:20px;font-size:10px;color:#444;letter-spacing:0.089px;">Edit</div>
<div class="a" style="left:149px;top:301.80px;width:1051px;height:1px;background:#eeeeee"></div>
<div class="a" style="left:151px;top:283.80px;width:10px;height:10px;border:1px solid #555;background:#fff"></div>
<svg class="ic" style="left:216.3px;top:283.5px" width="8" height="12" viewBox="0 0 8 12"><path d="M4 0 L7.5 6 L4 12 L0.5 6 Z" fill="#8fb0db"/></svg>
<div class="t lnk" style="left:230.8px;top:280.60px;line-height:20px;font-size:10px;color:#6a6a6a;letter-spacing:0.412px;">Ability to delete existing books in the system</div>
<div class="a" style="left:577px;top:283.30px;width:40.00px;height:12.3px;background:#7ef77a"></div>
<div class="a" style="left:617px;top:283.30px;width:39.00px;height:12.3px;background:#dcdcdc"></div>
<div class="a" style="left:667px;top:277.50px;width:80px;height:24.30px;background:#f07556"></div>
<div class="t" style="left:669px;top:280.80px;line-height:20px;font-size:10.2px;color:#333;letter-spacing:0.227px;">1 - Critical</div>
<div class="t" style="left:749.2px;top:280.80px;line-height:20px;font-size:10px;color:#333;letter-spacing:0.006px;">Developed</div>
<div class="t" style="left:829.3px;top:280.80px;line-height:20px;font-size:10px;color:#333;letter-spacing:-0.092px;">Fred Bloggs</div>
<div class="t lnk" style="left:934.7px;top:280.80px;line-height:20px;font-size:10px;color:#666;letter-spacing:-0.028px;">1.0.0.0.0002</div>
<div class="t" style="left:1014.5px;top:280.80px;line-height:20px;font-size:10px;color:#333;letter-spacing:-0.161px;">Feature</div>
<div class="t" style="left:1094.4px;top:280.80px;line-height:20px;font-size:10.4px;color:#333;transform:scaleX(0.849);transform-origin:0 0;">RQ:6</div>
<div class="btn" style="left:1168px;top:279.80px;width:40px;height:20.5px"></div>
<div class="t" style="left:1176px;top:280.90px;line-height:20px;font-size:10px;color:#444;letter-spacing:0.089px;">Edit</div>
<div class="a" style="left:149px;top:327.10px;width:1051px;height:1px;background:#eeeeee"></div>
<div class="a" style="left:151px;top:309.10px;width:10px;height:10px;border:1px solid #555;background:#fff"></div>
<svg class="ic" style="left:216.3px;top:308.8px" width="8" height="12" viewBox="0 0 8 12"><path d="M4 0 L7.5 6 L4 12 L0.5 6 Z" fill="#8fb0db"/></svg>
<div class="t lnk" style="left:230.8px;top:305.90px;line-height:20px;font-size:10px;color:#6a6a6a;letter-spacing:0.371px;">Ability to associate books with different subjects</div>
<div class="a" style="left:577px;top:308.60px;width:40.00px;height:12.3px;background:#7ef77a"></div>
<div class="a" style="left:617px;top:308.60px;width:39.00px;height:12.3px;background:#f07556"></div>
<div class="a" style="left:667px;top:302.80px;width:80px;height:24.30px;background:#f07556"></div>
<div class="t" style="left:669px;top:306.10px;line-height:20px;font-size:10.2px;color:#333;letter-spacing:0.227px;">1 - Critical</div>
<div class="t" style="left:749.2px;top:306.10px;line-height:20px;font-size:10px;color:#333;letter-spacing:0.006px;">Developed</div>
<div class="t" style="left:829.3px;top:306.10px;line-height:20px;font-size:10px;color:#333;letter-spacing:-0.092px;">Fred Bloggs</div>
<div class="t lnk" style="left:934.7px;top:306.10px;line-height:20px;font-size:10px;color:#666;letter-spacing:-0.537px;">1.1.0.0.0001</div>
<div class="t" style="left:1014.5px;top:306.10px;line-height:20px;font-size:10px;color:#333;letter-spacing:-0.161px;">Feature</div>
<div class="t" style="left:1094.4px;top:306.10px;line-height:20px;font-size:10.4px;color:#333;transform:scaleX(0.849);transform-origin:0 0;">RQ:7</div>
<div class="btn" style="left:1168px;top:305.10px;width:40px;height:20.5px"></div>
<div class="t" style="left:1176px;top:306.20px;line-height:20px;font-size:10px;color:#444;letter-spacing:0.089px;">Edit</div>
<div class="a" style="left:149px;top:352.40px;width:1051px;height:1px;background:#eeeeee"></div>
<div class="a" style="left:151px;top:334.40px;width:10px;height:10px;border:1px solid #555;background:#fff"></div>
<svg class="ic" style="left:216.3px;top:334.1px" width="8" height="12" viewBox="0 0 8 12"><path d="M4 0 L7.5 6 L4 12 L0.5 6 Z" fill="#8fb0db"/></svg>
<div class="t lnk" style="left:230.8px;top:331.20px;line-height:20px;font-size:10px;color:#6a6a6a;letter-spacing:0.402px;">Ability to associate books with different authors</div>
<div class="a" style="left:577px;top:333.90px;width:40.00px;height:12.3px;background:#7ef77a"></div>
<div class="a" style="left:617px;top:333.90px;width:39.00px;height:12.3px;background:#dcdcdc"></div>
<div class="a" style="left:667px;top:328.10px;width:80px;height:24.30px;background:#f07556"></div>
<div class="t" style="left:669px;top:331.40px;line-height:20px;font-size:10.2px;color:#333;letter-spacing:0.227px;">1 - Critical</div>
<div class="t" style="left:749.2px;top:331.40px;line-height:20px;font-size:10px;color:#333;letter-spacing:0.006px;">Developed</div>
<div class="t" style="left:829.3px;top:331.40px;line-height:20px;font-size:10px;color:#333;letter-spacing:-0.092px;">Fred Bloggs</div>
<div class="t lnk" style="left:934.7px;top:331.40px;line-height:20px;font-size:10px;color:#666;letter-spacing:-0.537px;">1.1.0.0.0001</div>
<div class="t" style="left:1014.5px;top:331.40px;line-height:20px;font-size:10px;color:#333;letter-spacing:-0.161px;">Feature</div>
<div class="t" style="left:1094.4px;top:331.40px;line-height:20px;font-size:10.4px;color:#333;transform:scaleX(0.849);transform-origin:0 0;">RQ:8</div>
<div class="btn" style="left:1168px;top:330.40px;width:40px;height:20.5px"></div>
<div class="t" style="left:1176px;top:331.50px;line-height:20px;font-size:10px;color:#444;letter-spacing:0.089px;">Edit</div>
<div class="a" style="left:149px;top:377.70px;width:1051px;height:1px;background:#eeeeee"></div>
<div class="a" style="left:151px;top:359.70px;width:10px;height:10px;border:1px solid #555;background:#fff"></div>
<svg class="ic" style="left:216.3px;top:359.4px" width="8" height="12" viewBox="0 0 8 12"><path d="M4 0 L7.5 6 L4 12 L0.5 6 Z" fill="#8fb0db"/></svg>
<div class="t lnk" style="left:230.8px;top:356.50px;line-height:20px;font-size:10px;color:#6a6a6a;letter-spacing:0.416px;">Ability to associate books with different editions</div>
<div class="a" style="left:577px;top:359.20px;width:27.00px;height:12.3px;background:#7ef77a"></div>
<div class="a" style="left:604px;top:359.20px;width:26.00px;height:12.3px;background:#f07556"></div>
<div class="a" style="left:630px;top:359.20px;width:26.00px;height:12.3px;background:#dcdcdc"></div>
<div class="a" style="left:667px;top:353.40px;width:80px;height:24.30px;background:#f07556"></div>
<div class="t" style="left:669px;top:356.70px;line-height:20px;font-size:10.2px;color:#333;letter-spacing:0.227px;">1 - Critical</div>
<div class="t" style="left:749.2px;top:356.70px;line-height:20px;font-size:10px;color:#333;letter-spacing:0.006px;">Developed</div>
<div class="t" style="left:829.3px;top:356.70px;line-height:20px;font-size:10px;color:#333;letter-spacing:-0.092px;">Fred Bloggs</div>
<div class="t lnk" style="left:934.7px;top:356.70px;line-height:20px;font-size:10px;color:#666;letter-spacing:-0.337px;">1.1.0.0.0002</div>
<div class="t" style="left:1014.5px;top:356.70px;line-height:20px;font-size:10px;color:#333;letter-spacing:-0.161px;">Feature</div>
<div class="t" style="left:1094.4px;top:356.70px;line-height:20px;font-size:10.4px;color:#333;transform:scaleX(0.849);transform-origin:0 0;">RQ:9</div>
<div class="btn" style="left:1168px;top:355.70px;width:40px;height:20.5px"></div>
<div class="t" style="left:1176px;top:356.80px;line-height:20px;font-size:10px;color:#444;letter-spacing:0.089px;">Edit</div>
<div class="a" style="left:149px;top:403.00px;width:1051px;height:1px;background:#eeeeee"></div>
<div class="a" style="left:151px;top:385.00px;width:10px;height:10px;border:1px solid #555;background:#fff"></div>
<svg class="ic" style="left:216.3px;top:384.70000000000005px" width="8" height="12" viewBox="0 0 8 12"><path d="M4 0 L7.5 6 L4 12 L0.5 6 Z" fill="#8fb0db"/></svg>
<div class="t lnk" style="left:230.8px;top:381.80px;line-height:20px;font-size:10px;color:#6a6a6a;letter-spacing:0.391px;">Ability to completely erase all books stored in the system with one click</div>
<div class="a" style="left:577px;top:384.50px;width:27.00px;height:12.3px;background:#7ef77a"></div>
<div class="a" style="left:604px;top:384.50px;width:26.00px;height:12.3px;background:#f07556"></div>
<div class="a" style="left:630px;top:384.50px;width:26.00px;height:12.3px;background:#dcdcdc"></div>
<div class="a" style="left:667px;top:378.70px;width:80px;height:24.30px;background:#f07556"></div>
<div class="t" style="left:669px;top:382.00px;line-height:20px;font-size:10.2px;color:#333;letter-spacing:0.227px;">1 - Critical</div>
<div class="t" style="left:749.2px;top:382.00px;line-height:20px;font-size:10px;color:#333;letter-spacing:0.006px;">Developed</div>
<div class="t" style="left:829.3px;top:382.00px;line-height:20px;font-size:10px;color:#333;letter-spacing:-0.092px;">Fred Bloggs</div>
<div class="t lnk" style="left:934.7px;top:382.00px;line-height:20px;font-size:10px;color:#666;letter-spacing:-0.680px;">1.2.0.0</div>
<div class="t" style="left:1014.5px;top:382.00px;line-height:20px;font-size:10px;color:#333;letter-spacing:-0.161px;">Feature</div>
<div class="t" style="left:1094.4px;top:382.00px;line-height:20px;font-size:10.4px;color:#333;transform:scaleX(0.815);transform-origin:0 0;">RQ:10</div>
<div class="btn" style="left:1168px;top:381.00px;width:40px;height:20.5px"></div>
<div class="t" style="left:1176px;top:382.10px;line-height:20px;font-size:10px;color:#444;letter-spacing:0.089px;">Edit</div>
<div class="a" style="left:149px;top:428.30px;width:1051px;height:1px;background:#eeeeee"></div>
<div class="a" style="left:151px;top:410.30px;width:10px;height:10px;border:1px solid #555;background:#fff"></div>
<svg class="ic" style="left:196.2px;top:411.2px" width="5" height="5" viewBox="0 0 5 5"><path d="M4.3 0 L4.3 4.6 L0.3 4.6 Z" fill="#555"/></svg>
<svg class="ic" style="left:207.5px;top:412.2px" width="11" height="12" viewBox="0 0 11 12"><path d="M1.3 0 L5.5 4.2 L5.5 12 L0 6.9 Z" fill="#93a9d9"/><path d="M9.7 0 L5.5 4.2 L5.5 12 L11 6.9 Z" fill="#7b8de6"/><path d="M5.5 4 C7.1 5.2 7.3 7.3 6.9 8.7 L5.5 11.8 L4.1 8.7 C3.7 7.3 3.9 5.2 5.5 4 Z" fill="#3d4dc0"/></svg>
<div class="t lnk" style="left:222.7px;top:407.10px;line-height:20px;font-size:10px;color:#6a6a6a;letter-spacing:0.281px;">Edition Management</div>
<div class="t" style="left:577.6px;top:407.30px;line-height:20px;font-size:10px;color:#777;letter-spacing:0.046px;">Not Covered</div>
<div class="a" style="left:667px;top:404.00px;width:80px;height:24.30px;background:#f07556"></div>
<div class="t" style="left:669px;top:407.30px;line-height:20px;font-size:10.2px;color:#333;letter-spacing:0.227px;">1 - Critical</div>
<div class="t" style="left:749.2px;top:407.30px;line-height:20px;font-size:10px;color:#333;letter-spacing:0.005px;">In Progress</div>
<div class="t" style="left:829.3px;top:407.30px;line-height:20px;font-size:10px;color:#333;letter-spacing:-0.092px;">Fred Bloggs</div>
<div class="t" style="left:1014.5px;top:407.30px;line-height:20px;font-size:10px;color:#333;letter-spacing:-0.151px;">Epic</div>
<div class="t" style="left:1094.4px;top:407.30px;line-height:20px;font-size:10.4px;color:#333;transform:scaleX(0.731);transform-origin:0 0;">RQ:11</div>
<div class="btn" style="left:1168px;top:406.30px;width:40px;height:20.5px"></div>
<div class="t" style="left:1176px;top:407.40px;line-height:20px;font-size:10px;color:#444;letter-spacing:0.089px;">Edit</div>
<div class="a" style="left:149px;top:453.60px;width:1051px;height:1px;background:#eeeeee"></div>
<div class="a" style="left:151px;top:435.60px;width:10px;height:10px;border:1px solid #555;background:#fff"></div>
<svg class="ic" style="left:216.3px;top:435.3px" width="8" height="12" viewBox="0 0 8 12"><path d="M4 0 L7.5 6 L4 12 L0.5 6 Z" fill="#8fb0db"/></svg>
<div class="t lnk" style="left:230.8px;top:432.40px;line-height:20px;font-size:10px;color:#6a6a6a;letter-spacing:0.445px;">Ability to create different editions</div>
<div class="t" style="left:577.6px;top:432.60px;line-height:20px;font-size:10px;color:#777;letter-spacing:0.046px;">Not Covered</div>
<div class="a" style="left:667px;top:429.30px;width:80px;height:24.30px;background:#f07556"></div>
<div class="t" style="left:669px;top:432.60px;line-height:20px;font-size:10.2px;color:#333;letter-spacing:0.227px;">1 - Critical</div>
<div class="t" style="left:749.2px;top:432.60px;line-height:20px;font-size:10px;color:#333;letter-spacing:0.005px;">In Progress</div>
<div class="t" style="left:829.3px;top:432.60px;line-height:20px;font-size:10px;color:#333;letter-spacing:0.275px;">System Administrator</div>
<div class="t lnk" style="left:934.7px;top:432.60px;line-height:20px;font-size:10px;color:#666;letter-spacing:-0.028px;">1.0.0.0.0003</div>
<div class="t" style="left:1014.5px;top:432.60px;line-height:20px;font-size:10px;color:#333;letter-spacing:-0.161px;">Feature</div>
<div class="t" style="left:1094.4px;top:432.60px;line-height:20px;font-size:10.4px;color:#333;transform:scaleX(0.772);transform-origin:0 0;">RQ:12</div>
<div class="btn" style="left:1168px;top:431.60px;width:40px;height:20.5px"></div>
<div class="t" style="left:1176px;top:432.70px;line-height:20px;font-size:10px;color:#444;letter-spacing:0.089px;">Edit</div>
<div class="a" style="left:149px;top:478.90px;width:1051px;height:1px;background:#eeeeee"></div>
<div class="a" style="left:151px;top:460.90px;width:10px;height:10px;border:1px solid #555;background:#fff"></div>
<svg class="ic" style="left:196.2px;top:461.8px" width="5" height="5" viewBox="0 0 5 5"><path d="M4.3 0 L4.3 4.6 L0.3 4.6 Z" fill="#555"/></svg>
<svg class="ic" style="left:207.5px;top:462.8px" width="11" height="12" viewBox="0 0 11 12"><path d="M1.3 0 L5.5 4.2 L5.5 12 L0 6.9 Z" fill="#93a9d9"/><path d="M9.7 0 L5.5 4.2 L5.5 12 L11 6.9 Z" fill="#7b8de6"/><path d="M5.5 4 C7.1 5.2 7.3 7.3 6.9 8.7 L5.5 11.8 L4.1 8.7 C3.7 7.3 3.9 5.2 5.5 4 Z" fill="#3d4dc0"/></svg>
<div class="t lnk" style="left:222.7px;top:457.70px;line-height:20px;font-size:10px;color:#6a6a6a;letter-spacing:0.293px;">Author Management</div>
<div class="a" style="left:577px;top:460.40px;width:53.00px;height:12.3px;background:#7ef77a"></div>
<div class="a" style="left:630px;top:460.40px;width:26.00px;height:12.3px;background:#f4ef5c"></div>
<div class="a" style="left:667px;top:454.60px;width:80px;height:24.30px;background:#f2a25a"></div>
<div class="t" style="left:669px;top:457.90px;line-height:20px;font-size:10.2px;color:#333;letter-spacing:0.469px;">2 - High</div>
<div class="t" style="left:749.2px;top:457.90px;line-height:20px;font-size:10px;color:#333;letter-spacing:0.005px;">In Progress</div>
<div class="t" style="left:829.3px;top:457.90px;line-height:20px;font-size:10px;color:#333;letter-spacing:0.257px;">Joe P Smith</div>
<div class="t" style="left:1014.5px;top:457.90px;line-height:20px;font-size:10px;color:#333;letter-spacing:-0.151px;">Epic</div>
<div class="t" style="left:1094.4px;top:457.90px;line-height:20px;font-size:10.4px;color:#333;transform:scaleX(0.772);transform-origin:0 0;">RQ:13</div>
<div class="btn" style="left:1168px;top:456.90px;width:40px;height:20.5px"></div>
<div class="t" style="left:1176px;top:458.00px;line-height:20px;font-size:10px;color:#444;letter-spacing:0.089px;">Edit</div>
<div class="a" style="left:149px;top:504.20px;width:1051px;height:1px;background:#eeeeee"></div>
<div class="a" style="left:151px;top:486.20px;width:10px;height:10px;border:1px solid #555;background:#fff"></div>
<svg class="ic" style="left:204.3px;top:487.1px" width="5" height="5" viewBox="0 0 5 5"><path d="M4.3 0 L4.3 4.6 L0.3 4.6 Z" fill="#555"/></svg>
<svg class="ic" style="left:215.60000000000002px;top:488.1px" width="11" height="12" viewBox="0 0 11 12"><path d="M1.3 0 L5.5 4.2 L5.5 12 L0 6.9 Z" fill="#93a9d9"/><path d="M9.7 0 L5.5 4.2 L5.5 12 L11 6.9 Z" fill="#7b8de6"/><path d="M5.5 4 C7.1 5.2 7.3 7.3 6.9 8.7 L5.5 11.8 L4.1 8.7 C3.7 7.3 3.9 5.2 5.5 4 Z" fill="#3d4dc0"/></svg>
<div class="t lnk" style="left:230.8px;top:483.00px;line-height:20px;font-size:10px;color:#6a6a6a;letter-spacing:0.504px;">Ability to add new authors to the system</div>
<div class="a" style="left:577px;top:485.70px;width:40.00px;height:12.3px;background:#7ef77a"></div>
<div class="a" style="left:617px;top:485.70px;width:39.00px;height:12.3px;background:#f4ef5c"></div>
<div class="a" style="left:667px;top:479.90px;width:80px;height:24.30px;background:#f2a25a"></div>
<div class="t" style="left:669px;top:483.20px;line-height:20px;font-size:10.2px;color:#333;letter-spacing:0.469px;">2 - High</div>
<div class="t" style="left:749.2px;top:483.20px;line-height:20px;font-size:10px;color:#333;letter-spacing:0.006px;">Planned</div>
<div class="t" style="left:829.3px;top:483.20px;line-height:20px;font-size:10px;color:#333;letter-spacing:0.257px;">Joe P Smith</div>
<div class="t lnk" style="left:934.7px;top:483.20px;line-height:20px;font-size:10px;color:#666;letter-spacing:-0.380px;">1.0.0.0</div>
<div class="t" style="left:1014.5px;top:483.20px;line-height:20px;font-size:10px;color:#333;letter-spacing:-0.151px;">Epic</div>
<div class="t" style="left:1094.4px;top:483.20px;line-height:20px;font-size:10.4px;color:#333;transform:scaleX(0.795);transform-origin:0 0;">RQ:14</div>
<div class="btn" style="left:1168px;top:482.20px;width:40px;height:20.5px"></div>
<div class="t" style="left:1176px;top:483.30px;line-height:20px;font-size:10px;color:#444;letter-spacing:0.089px;">Edit</div>
</body></html>
